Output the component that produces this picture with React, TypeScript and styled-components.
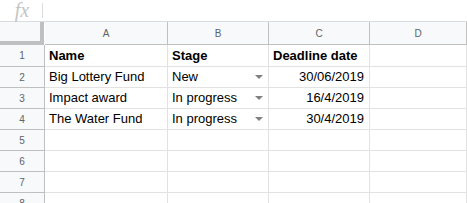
import { Fragment } from 'react';
import styled, { createGlobalStyle } from 'styled-components';

const GlobalStyle = createGlobalStyle`
  html, body {
    margin: 0;
    padding: 0;
    background: #ffffff;
    font-family: "Liberation Sans", Arial, sans-serif;
    overflow: hidden;
  }
`;

const Page = styled.div`
  width: 467px;
  height: 203px;
  overflow: hidden;
  display: flex;
  flex-direction: column;
`;

const FormulaBar = styled.div`
  height: 21px;
  flex: none;
  border-bottom: 1px solid #dadce0;
  display: flex;
  align-items: center;
`;

const Fx = styled.div`
  width: 43px;
  height: 15px;
  display: flex;
  align-items: center;
  justify-content: center;
  border-right: 1px solid #dadce0;
  font-family: "Liberation Serif", "Times New Roman", serif;
  font-style: italic;
  font-size: 20px;
  color: #c4c4c4;
  padding-left: 2px;
  box-sizing: border-box;
`;

const Grid = styled.div`
  display: grid;
  grid-template-columns: 45px 123px 101px 101px 1fr;
  grid-template-rows: 23px 22px repeat(7, 21px);
`;

const Corner = styled.div`
  background: #f8f9fa;
  border-right: 4px solid #c0c0c0;
  border-bottom: 4px solid #c0c0c0;
  box-sizing: border-box;
  width: 44px;
`;

const Head = styled.div`
  background: #f8f9fa;
  border-right: 1px solid #c0c0c0;
  border-bottom: 1px solid #c0c0c0;
  box-sizing: border-box;
  display: flex;
  align-items: center;
  justify-content: center;
  font-size: 10px;
  color: #5f6368;
`;

const ColHead = styled(Head)`
  padding-top: 1px;
`;

const RowHead = styled(Head)``;

const Cell = styled.div<{ $align?: 'left' | 'right'; $bold?: boolean }>`
  border-right: 1px solid #e2e2e2;
  border-bottom: 1px solid #e2e2e2;
  box-sizing: border-box;
  display: flex;
  align-items: flex-end;
  justify-content: ${(p) => (p.$align === 'right' ? 'flex-end' : 'space-between')};
  padding: 0 5px 2px 4px;
  font-size: 13px;
  line-height: 16px;
  font-weight: ${(p) => (p.$bold ? 700 : 400)};
  color: #000;
  white-space: nowrap;
  overflow: hidden;
`;

const Arrow = styled.span`
  width: 0;
  height: 0;
  border-left: 4px solid transparent;
  border-right: 4px solid transparent;
  border-top: 4px solid #808080;
  margin-bottom: 6px;
`;

type Row = { name: string; stage: string; date: string };

const rows: Row[] = [
  { name: 'Big Lottery Fund', stage: 'New', date: '30/06/2019' },
  { name: 'Impact award', stage: 'In progress', date: '16/4/2019' },
  { name: 'The Water Fund', stage: 'In progress', date: '30/4/2019' },
];

export default function App() {
  return (
    <Page>
      <GlobalStyle />
      <FormulaBar>
        <Fx>fx</Fx>
      </FormulaBar>
      <Grid>
        <Corner />
        <ColHead>A</ColHead>
        <ColHead>B</ColHead>
        <ColHead>C</ColHead>
        <ColHead>D</ColHead>

        <RowHead>1</RowHead>
        <Cell $bold>Name</Cell>
        <Cell $bold>Stage</Cell>
        <Cell $bold>Deadline date</Cell>
        <Cell />

        {rows.map((r, i) => (
          <Fragment key={r.name}>
            <RowHead>{i + 2}</RowHead>
            <Cell>{r.name}</Cell>
            <Cell>
              {r.stage}
              <Arrow />
            </Cell>
            <Cell $align="right">{r.date}</Cell>
            <Cell />
          </Fragment>
        ))}

        {[5, 6, 7, 8].map((n) => (
          <Fragment key={n}>
            <RowHead>{n}</RowHead>
            <Cell />
            <Cell />
            <Cell />
            <Cell />
          </Fragment>
        ))}
      </Grid>
    </Page>
  );
}
